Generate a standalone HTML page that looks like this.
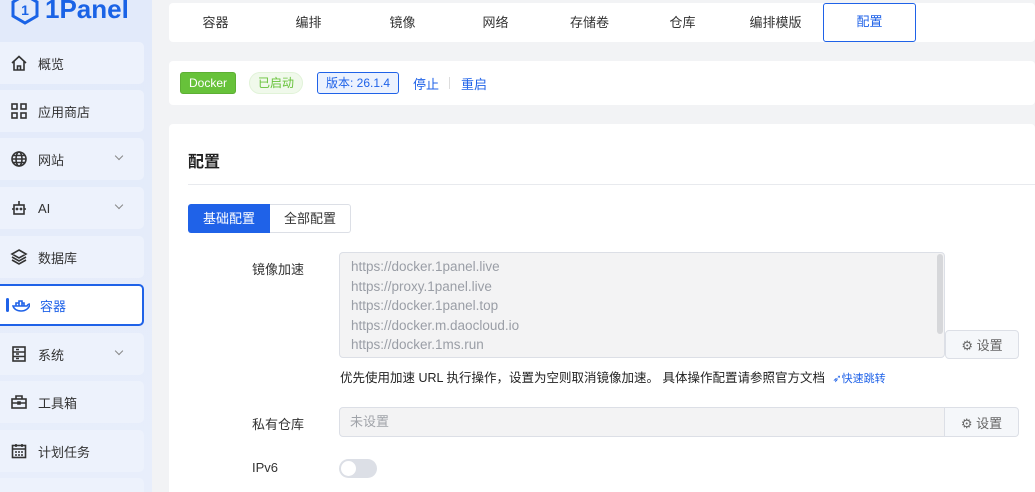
<!DOCTYPE html>
<html style="overflow:hidden;width:1035px;height:492px"><head><meta charset="utf-8"><style>
*{box-sizing:border-box;margin:0;padding:0}
body{width:1035px;height:492px;overflow:hidden;background:#f2f3f5;font-family:"Liberation Sans","Noto Sans CJK SC",sans-serif;font-size:13px;color:#1f2329;position:relative}
.side{position:absolute;left:0;top:0;width:152px;height:492px;overflow:hidden;background:linear-gradient(180deg,#e2eafa,#e8eefb)}
.logo{position:absolute;left:10px;top:-8px;font-size:26px;font-weight:bold;color:#1a63e6;display:flex;align-items:center;gap:5px}
.item{position:absolute;left:-6px;width:150px;height:42px;background:#edf2fc;border-radius:5px;display:flex;align-items:center;padding-left:16px;font-size:13px;color:#333}
.item svg{width:18px;height:18px;margin-right:10px;stroke:#333;fill:none;stroke-width:1.6}
.item .ch{position:absolute;right:22px;top:15px;width:6px;height:6px;border-right:1px solid #888;border-bottom:1px solid #888;transform:rotate(45deg)}
.item.act{background:#fff;border:2px solid #1f62e8;color:#1f62e8}
.card{position:absolute;left:169px;right:0;background:#fff;border-radius:4px}
.tab{position:absolute;top:0;height:39px;width:93px;text-align:center;line-height:39px;color:#333;font-size:13px}
.tag{position:absolute;top:11px;height:22px;line-height:20px;font-size:12px;border-radius:3px;padding:0 8px;border:1px solid}
.lbl{position:absolute;font-size:13px;color:#333}
.ta{position:absolute;left:339px;top:252px;width:606px;height:106px;background:#f3f3f4;border:1px solid #dcdfe6;border-radius:4px;padding:4px 11px;color:#9a9ea6;line-height:19.6px;font-size:13.5px}
.btn{position:absolute;background:#f5f7fa;border:1px solid #dcdfe6;border-radius:4px;color:#666;font-size:13px;display:flex;align-items:center;justify-content:center;gap:6px}
</style></head><body>
<div class="side">
 <div class="logo"><svg width="30" height="34" viewBox="0 0 30 34"><path d="M15 3 L27 10 V24 L15 31 L3 24 V10Z" fill="none" stroke="#1a63e6" stroke-width="3"/><text x="15" y="23" font-size="14" font-weight="bold" fill="#1a63e6" text-anchor="middle" font-family="Liberation Sans">1</text></svg>1Panel</div>
 <div class="item" style="top:42px"><svg viewBox="0 0 18 18"><path d="M2 9L9 2.5 16 9M4 7.5V16h10V7.5M7.5 16v-4h3v4"/></svg>概览</div>
 <div class="item" style="top:90px"><svg viewBox="0 0 18 18"><rect x="2" y="2" width="5" height="5"/><rect x="11" y="2" width="5" height="5"/><rect x="2" y="11" width="5" height="5"/><rect x="11" y="11" width="5" height="5"/></svg>应用商店</div>
 <div class="item" style="top:138px"><svg viewBox="0 0 18 18"><circle cx="9" cy="9" r="7"/><ellipse cx="9" cy="9" rx="3" ry="7"/><path d="M2 9h14M3 5.5h12M3 12.5h12"/></svg>网站<span class="ch"></span></div>
 <div class="item" style="top:187px"><svg viewBox="0 0 18 18"><rect x="4" y="6" width="10" height="9"/><path d="M9 2v4M2 10h2M14 10h2"/><circle cx="7" cy="10" r=".6"/><circle cx="11" cy="10" r=".6"/></svg>AI<span class="ch"></span></div>
 <div class="item" style="top:236px"><svg viewBox="0 0 18 18"><path d="M9 2L16 6 9 10 2 6Z M2 9l7 4 7-4 M2 12l7 4 7-4"/></svg>数据库</div>
 <div class="item act" style="top:284px;height:42px"><span style="position:absolute;left:10px;top:12px;width:3px;height:14px;background:#1f62e8;border-radius:2px"></span><svg viewBox="0 0 18 18" style="stroke:#1f62e8;margin-left:0"><path d="M1 10h14c1-2 2-2 3-2-1 5-5 7-9 7-4 0-7-2-8-5z"/><path d="M4 10V7h3v3M7 10V5h3v5M10 10V7h2v3"/></svg>容器</div>
 <div class="item" style="top:333px"><svg viewBox="0 0 18 18"><rect x="3" y="2" width="12" height="14"/><path d="M3 7h12M3 11.5h12M6 4.5h3M6 9h3M6 13.5h3"/></svg>系统<span class="ch"></span></div>
 <div class="item" style="top:381px"><svg viewBox="0 0 18 18"><rect x="2" y="6" width="14" height="9"/><path d="M6 6V3h6v3M2 10h14M8 9h2v2H8z"/></svg>工具箱</div>
 <div class="item" style="top:430px"><svg viewBox="0 0 18 18"><rect x="2.5" y="3.5" width="13" height="12"/><path d="M6 2v3M12 2v3M2.5 7h13M5 10h2M8 10h2M11 10h2M5 13h2M8 13h2M11 13h2"/></svg>计划任务</div>
 <div class="item" style="top:478px;height:14px;border-radius:5px 5px 0 0"></div>
</div>

<div class="card" style="top:3px;height:39px">
 <div class="tab" style="left:0">容器</div><div class="tab" style="left:93px">编排</div><div class="tab" style="left:187px">镜像</div><div class="tab" style="left:280px">网络</div><div class="tab" style="left:374px">存储卷</div><div class="tab" style="left:467px">仓库</div><div class="tab" style="left:560px">编排模版</div><div class="tab" style="left:654px;border:1.5px solid #1f62e8;border-radius:3px;color:#1f62e8;line-height:36px">配置</div>
</div>

<div class="card" style="top:61px;height:44px">
 <span class="tag" style="left:11px;background:#67c23a;border-color:#5daf34;color:#fff">Docker</span>
 <span class="tag" style="left:80px;background:#f0f9eb;border-color:#e1f3d8;color:#67c23a;border-radius:11px">已启动</span>
 <span class="tag" style="left:148px;background:#ecf2fe;border-color:#1f62e8;color:#1f62e8">版本: 26.1.4</span>
 <span style="position:absolute;left:244px;top:13px;color:#1f62e8;font-size:13px">停止</span>
 <span style="position:absolute;left:280px;top:16px;width:1px;height:12px;background:#ddd"></span>
 <span style="position:absolute;left:292px;top:13px;color:#1f62e8;font-size:13px">重启</span>
</div>

<div class="card" style="top:124px;height:368px;border-radius:4px 4px 0 0">
 <div style="position:absolute;left:19px;top:24px;font-size:16px;font-weight:bold;color:#222">配置</div>
 <div style="position:absolute;left:19px;right:0;top:60px;height:1px;background:#e8eaee"></div>
 <div style="position:absolute;left:19px;top:80px;width:82px;height:29px;background:#1f62e8;color:#fff;border-radius:3px 0 0 3px;text-align:center;line-height:29px">基础配置</div>
 <div style="position:absolute;left:101px;top:80px;width:81px;height:29px;border:1px solid #dcdfe6;border-left:none;border-radius:0 3px 3px 0;text-align:center;line-height:27px;color:#333">全部配置</div>
</div>

<div class="lbl" style="left:252px;top:259px">镜像加速</div>
<div class="ta">https://docker.1panel.live<br>https://proxy.1panel.live<br>https://docker.1panel.top<br>https://docker.m.daocloud.io<br>https://docker.1ms.run</div>
<div style="position:absolute;left:937px;top:254px;width:6px;height:80px;background:#d6d7da;border-radius:3px"></div>
<div class="btn" style="left:945px;top:330px;width:74px;height:29px">⚙ 设置</div>
<div style="position:absolute;left:340px;top:367px;font-size:12.5px;color:#222">优先使用加速 URL 执行操作，设置为空则取消镜像加速。 具体操作配置请参照官方文档 <span style="color:#1f62e8;font-size:11px;margin-left:4px">➶快速跳转</span></div>

<div class="lbl" style="left:252px;top:414px">私有仓库</div>
<div style="position:absolute;left:339px;top:407px;width:606px;height:30px;background:#f3f3f4;border:1px solid #dcdfe6;border-radius:4px 0 0 4px;padding-left:10px;line-height:28px;color:#a0a3a9">未设置</div>
<div class="btn" style="left:944px;top:407px;width:75px;height:30px;border-radius:0 4px 4px 0">⚙ 设置</div>

<div class="lbl" style="left:252px;top:460px">IPv6</div>
<div style="position:absolute;left:339px;top:459px;width:38px;height:19px;background:#dcdfe6;border-radius:10px"><span style="position:absolute;left:2px;top:2px;width:15px;height:15px;background:#fff;border-radius:50%"></span></div>
</body></html>
